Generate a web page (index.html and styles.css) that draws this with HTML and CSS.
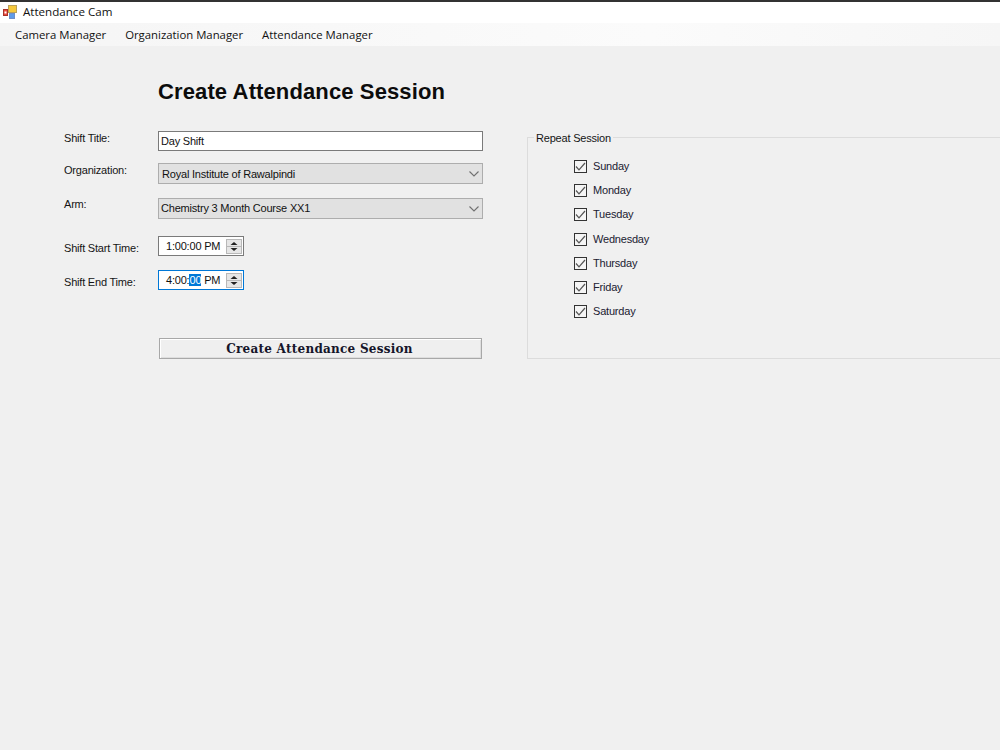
FILE: index.html
```html
<!DOCTYPE html>
<html lang="en">
<head>
<meta charset="utf-8">
<title>Attendance Cam</title>
<link rel="stylesheet" href="styles.css">
</head>
<body>
<div class="window">
  <header class="titlebar">
    <svg class="app-icon" width="14" height="14" viewBox="0 0 14 14">
      <rect x="5.5" y="0.5" width="8" height="7" fill="#f6c93c" stroke="#b9a05a"/>
      <rect x="6.5" y="8.5" width="5" height="5" fill="#5f9be8" stroke="#6f8fc8"/>
      <rect x="0.5" y="4.5" width="4" height="6" fill="#e8483c" stroke="#a83228"/>
      <rect x="1.5" y="6.5" width="2" height="2" fill="#fff"/>
    </svg>
    <span class="app-title">Attendance Cam</span>
  </header>
  <nav class="menubar">
    <span class="menu-item">Camera Manager</span>
    <span class="menu-item">Organization Manager</span>
    <span class="menu-item">Attendance Manager</span>
  </nav>
  <main class="content">
    <section class="form">
      <h1 class="heading">Create Attendance Session</h1>
      <div class="row row-title">
        <label class="label">Shift Title:</label>
        <div class="textbox">Day Shift</div>
      </div>
      <div class="row row-org">
        <label class="label">Organization:</label>
        <div class="combo"><span class="combo-text org-text">Royal Institute of Rawalpindi</span>
          <svg class="chevron" width="10" height="6" viewBox="0 0 10 6"><path d="M0.5 0.5 L5 5 L9.5 0.5" fill="none" stroke="#707070" stroke-width="1.1"/></svg>
        </div>
      </div>
      <div class="row row-arm">
        <label class="label label-arm">Arm:</label>
        <div class="combo"><span class="combo-text arm-text">Chemistry 3 Month Course XX1</span>
          <svg class="chevron" width="10" height="6" viewBox="0 0 10 6"><path d="M0.5 0.5 L5 5 L9.5 0.5" fill="none" stroke="#707070" stroke-width="1.1"/></svg>
        </div>
      </div>
      <div class="row row-start">
        <label class="label label-down">Shift Start Time:</label>
        <div class="timebox">
          <span class="time-text">1:00:00 PM</span>
          <div class="spinner">
            <svg width="16" height="15" viewBox="0 0 16 15"><rect x="0.5" y="0.5" width="15" height="14" fill="#e6e6e6" stroke="#b8b8b8"/><path d="M1 7.5 H15" stroke="#b8b8b8"/><path d="M8 3 L11.5 6 H4.5 Z" fill="#222"/><path d="M4.5 9 H11.5 L8 12 Z" fill="#222"/></svg>
          </div>
        </div>
      </div>
      <div class="row row-end">
        <label class="label label-down">Shift End Time:</label>
        <div class="timebox focused">
          <span class="time-text">4:00:<span class="selected">00</span> PM</span>
          <div class="spinner">
            <svg width="16" height="15" viewBox="0 0 16 15"><rect x="0.5" y="0.5" width="15" height="14" fill="#e6e6e6" stroke="#b8b8b8"/><path d="M1 7.5 H15" stroke="#b8b8b8"/><path d="M8 3 L11.5 6 H4.5 Z" fill="#222"/><path d="M4.5 9 H11.5 L8 12 Z" fill="#222"/></svg>
          </div>
        </div>
      </div>
      <div class="row row-button">
        <span class="label"></span>
        <button class="submit" type="button">Create Attendance Session</button>
      </div>
    </section>
    <fieldset class="group">
      <legend class="group-legend">Repeat Session</legend>
      <ul class="days">
        <li class="day"><svg class="check" width="13" height="13" viewBox="0 0 13 13"><rect x="0.5" y="0.5" width="12" height="12" fill="#f5f5f5" stroke="#333"/><path d="M2 6.5 L5 9.8 L11 3" fill="none" stroke="#555" stroke-width="1.2"/></svg>Sunday</li>
        <li class="day"><svg class="check" width="13" height="13" viewBox="0 0 13 13"><rect x="0.5" y="0.5" width="12" height="12" fill="#f5f5f5" stroke="#333"/><path d="M2 6.5 L5 9.8 L11 3" fill="none" stroke="#555" stroke-width="1.2"/></svg>Monday</li>
        <li class="day"><svg class="check" width="13" height="13" viewBox="0 0 13 13"><rect x="0.5" y="0.5" width="12" height="12" fill="#f5f5f5" stroke="#333"/><path d="M2 6.5 L5 9.8 L11 3" fill="none" stroke="#555" stroke-width="1.2"/></svg>Tuesday</li>
        <li class="day day-gap"><svg class="check" width="13" height="13" viewBox="0 0 13 13"><rect x="0.5" y="0.5" width="12" height="12" fill="#f5f5f5" stroke="#333"/><path d="M2 6.5 L5 9.8 L11 3" fill="none" stroke="#555" stroke-width="1.2"/></svg>Wednesday</li>
        <li class="day"><svg class="check" width="13" height="13" viewBox="0 0 13 13"><rect x="0.5" y="0.5" width="12" height="12" fill="#f5f5f5" stroke="#333"/><path d="M2 6.5 L5 9.8 L11 3" fill="none" stroke="#555" stroke-width="1.2"/></svg>Thursday</li>
        <li class="day"><svg class="check" width="13" height="13" viewBox="0 0 13 13"><rect x="0.5" y="0.5" width="12" height="12" fill="#f5f5f5" stroke="#333"/><path d="M2 6.5 L5 9.8 L11 3" fill="none" stroke="#555" stroke-width="1.2"/></svg>Friday</li>
        <li class="day"><svg class="check" width="13" height="13" viewBox="0 0 13 13"><rect x="0.5" y="0.5" width="12" height="12" fill="#f5f5f5" stroke="#333"/><path d="M2 6.5 L5 9.8 L11 3" fill="none" stroke="#555" stroke-width="1.2"/></svg>Saturday</li>
      </ul>
    </fieldset>
  </main>
</div>
</body>
</html>
```
FILE: styles.css
```css
* { box-sizing: border-box; }
html, body { margin: 0; padding: 0; height: 100%; overflow: hidden; }
body { background: #f0f0f0; font-family: "Liberation Sans", Arial, sans-serif; font-size: 11px; letter-spacing: -0.2px; color: #111; }
.window { width: 1000px; height: 750px; overflow: hidden; border-top: 2px solid #333; display: flex; flex-direction: column; }
.titlebar { height: 21px; flex: none; background: #fff; display: flex; align-items: center; padding: 0 0 2px 3px; }
.app-icon { margin-right: 6px; }
.app-title { font-family: "Open Sans", sans-serif; font-size: 11.6px; letter-spacing: 0; color: #111; }
.menubar { height: 23px; flex: none; background: linear-gradient(90deg, #f5f5f5, #fbfbfb 65%, #f6f6f6); display: flex; align-items: center; padding-left: 15px; gap: 19px; }
.menu-item { font-family: "Open Sans", sans-serif; font-size: 11.35px; letter-spacing: 0; color: #111; }
.content { flex: 1; display: flex; padding-left: 64px; align-items: flex-start; }
.form { width: 419px; flex: none; }
.heading { font-family: "Liberation Sans", Arial, sans-serif; font-weight: bold; font-size: 22px; letter-spacing: 0.12px; line-height: 26px; margin: 33px 0 0 94px; color: #0c0c0c; white-space: nowrap; }
.row { display: flex; align-items: flex-start; }
.row-title { margin-top: 26px; }
.row-org { margin-top: 12px; }
.row-arm { margin-top: 14px; }
.row-start { margin-top: 17px; }
.row-end { margin-top: 14px; }
.row-button { margin-top: 48px; }
.label { width: 94px; flex: none; line-height: 14px; white-space: nowrap; color: #151515; }
.label-arm { margin-top: -1px; margin-bottom: 1px; }
.label-down { margin-top: 5px; }
.textbox { width: 325px; height: 20px; background: #fff; border: 1px solid #7a7a7a; line-height: 18px; padding-left: 2px; }
.combo { width: 325px; height: 21px; background: #e1e1e1; border: 1px solid #adadad; display: flex; align-items: center; justify-content: space-between; padding: 0 2px; }
.combo-text { line-height: 18px; }
.org-text { padding-left: 1px; }
.arm-text { padding-bottom: 1px; }
.chevron { margin-right: 1px; }
.timebox { width: 86px; height: 20px; background: #fff; border: 1px solid #7a7a7a; display: flex; align-items: center; justify-content: space-between; padding: 0 1px 0 7px; }
.timebox.focused { border-color: #0078d7; }
.time-text { white-space: nowrap; }
.selected { background: #0078d7; color: #fff; }
.spinner { display: flex; }
.spinner svg { display: block; }
.submit { width: 323px; height: 21px; margin-left: 1px; padding: 0 2px 0 0; background: #efefef; border: 1px solid #a8a8a8; box-shadow: inset 1px 1px 0 #fff, inset -1px -1px 0 #dedede; font-family: "DejaVu Serif", serif; font-weight: bold; font-size: 12px; letter-spacing: 0.25px; color: #15152a; text-align: center; }
.group { margin: 83px 0 0 44px; padding: 0; width: 520px; height: 230px; flex: none; border: 1px solid #dcdcdc; min-width: 0; }
.group-legend { margin-left: 6px; padding: 2px 2px 0; line-height: 14px; color: #151515; }
.days { list-style: none; margin: 9px 0 0 46px; padding: 0; }
.day { height: 24px; display: flex; align-items: center; color: #202030; }
.day-gap { margin-top: 1px; }
.check { margin-right: 6px; flex: none; }
```
